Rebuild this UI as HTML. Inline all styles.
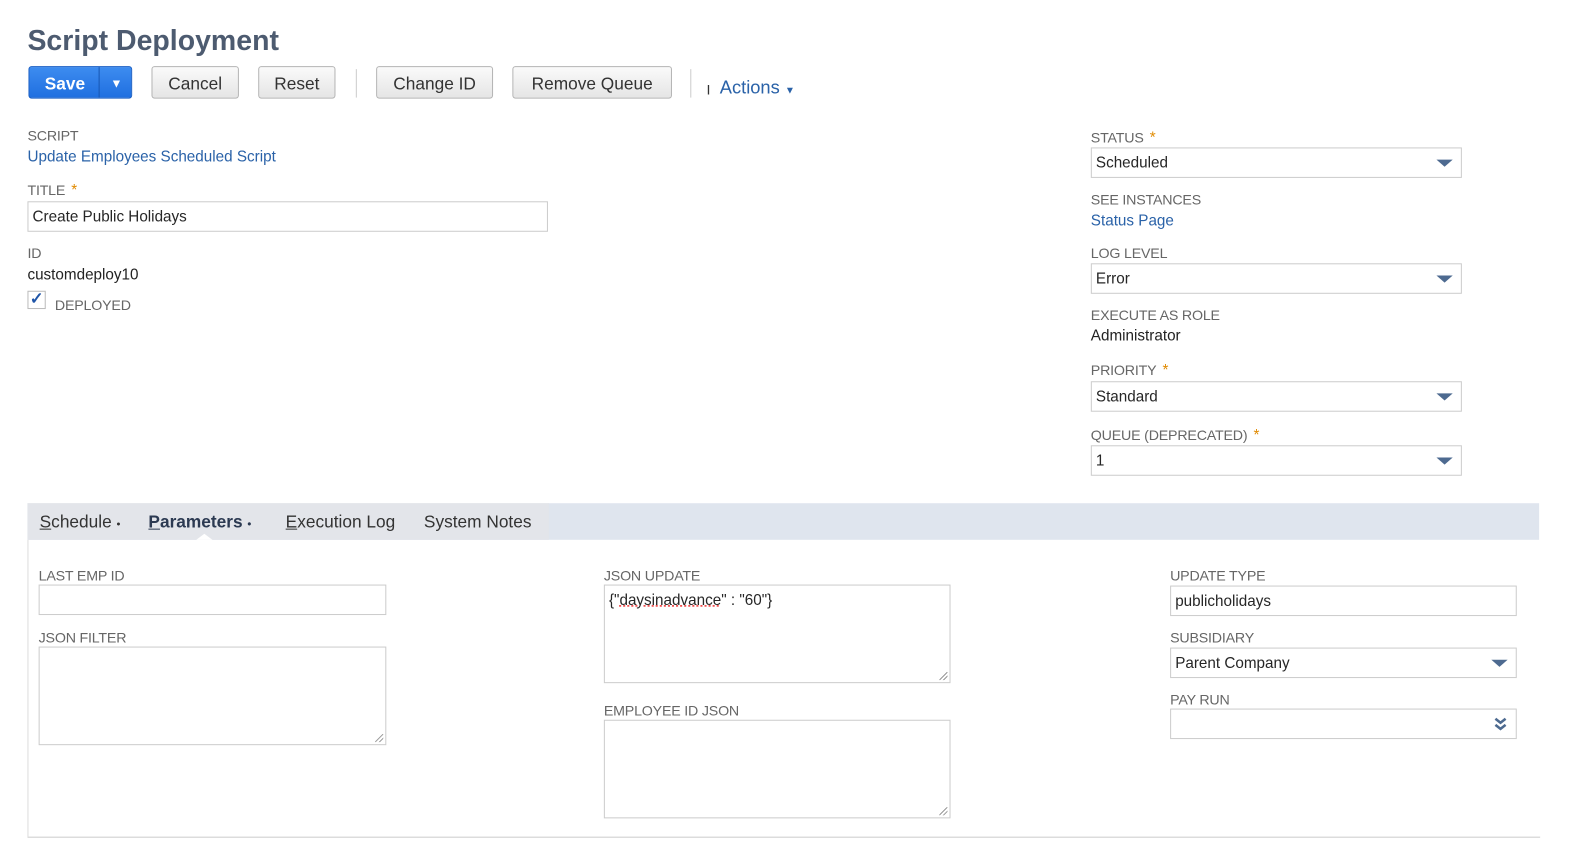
<!DOCTYPE html>
<html><head><meta charset="utf-8"><style>
body{margin:0;width:1594px;height:858px;background:#fff;font-family:"Liberation Sans",sans-serif;position:relative;overflow:hidden;color:#262626}
#w{position:absolute;left:0;top:0;width:1568px;height:844px;transform:scale(1.0166);transform-origin:0 0}
.a{position:absolute;white-space:nowrap}
.lbl{font-size:14px;color:#666;letter-spacing:-0.2px}
.val{font-size:15px;color:#222}
.link{font-size:15px;color:#2a62a8}
.star{color:#e08a00;font-size:15px;margin-left:6px}
.btn{position:absolute;top:65px;height:32px;border:1px solid #b4b4b4;border-radius:3px;background:linear-gradient(#fafafa,#e5e5e5);font-size:17px;color:#333;text-align:center;line-height:33px;box-sizing:border-box}
.inp{position:absolute;border:1px solid #ccc;box-sizing:border-box;background:#fff;font-size:15px;padding-left:4px;line-height:29px;height:30px}
.dd::after{content:"";position:absolute;right:8px;top:11px;border-left:8px solid transparent;border-right:8px solid transparent;border-top:7px solid #4d6a90}
.ta{position:absolute;border:1px solid #ccc;box-sizing:border-box;background:#fff}
.ta::after{content:"";position:absolute;right:2px;bottom:2px;width:8px;height:8px;background:linear-gradient(135deg,transparent 45%,#999 46%,#999 54%,transparent 55%,transparent 70%,#999 71%,#999 79%,transparent 80%)}
.tab{position:absolute;top:504px;font-size:17px;color:#333}
</style></head><body><div id="w">
<div class="a" style="left:27px;top:24px;font-size:28px;font-weight:bold;color:#4d5b70">Script Deployment</div>

<div class="btn" style="left:28px;width:102px;background:linear-gradient(#3d8cf0,#1f6fe0);border-color:#1a5fc4;color:#fff;font-weight:bold;text-align:left;padding-left:15px">Save<span style="position:absolute;left:68px;top:0;bottom:0;border-left:1px solid #1857b3;width:33px;text-align:center;padding:0;font-size:12px">▼</span></div>
<div class="btn" style="left:149px;width:86px">Cancel</div>
<div class="btn" style="left:254px;width:76px">Reset</div>
<div class="a" style="left:350px;top:68px;height:28px;border-left:1px solid #ccc"></div>
<div class="btn" style="left:370px;width:115px">Change ID</div>
<div class="btn" style="left:504px;width:157px">Remove Queue</div>
<div class="a" style="left:679px;top:68px;height:28px;border-left:1px solid #ccc"></div>
<div class="a" style="left:695px;top:80px;font-size:14px;color:#333">I</div>
<div class="a" style="left:708px;top:76px;font-size:18px;color:#2a62a8">Actions <span style="font-size:10px">▼</span></div>

<div class="a lbl" style="left:27px;top:125px">SCRIPT</div>
<div class="a link" style="left:27px;top:146px">Update Employees Scheduled Script</div>
<div class="a lbl" style="left:27px;top:179px">TITLE<span class="star">*</span></div>
<div class="inp" style="left:27px;top:198px;width:512px">Create Public Holidays</div>
<div class="a lbl" style="left:27px;top:241px">ID</div>
<div class="a val" style="left:27px;top:262px">customdeploy10</div>
<div class="a" style="left:27px;top:286px;width:18px;height:18px;border:1px solid #bbb;box-sizing:border-box;color:#1f55a8;font-size:16px;line-height:16px;text-align:center;font-weight:bold">✓</div>
<div class="a lbl" style="left:54px;top:292px">DEPLOYED</div>

<div class="a lbl" style="left:1073px;top:127px">STATUS<span class="star">*</span></div>
<div class="inp dd" style="left:1073px;top:145px;width:365px">Scheduled</div>
<div class="a lbl" style="left:1073px;top:188px">SEE INSTANCES</div>
<div class="a link" style="left:1073px;top:209px">Status Page</div>
<div class="a lbl" style="left:1073px;top:241px">LOG LEVEL</div>
<div class="inp dd" style="left:1073px;top:259px;width:365px">Error</div>
<div class="a lbl" style="left:1073px;top:302px">EXECUTE AS ROLE</div>
<div class="a val" style="left:1073px;top:322px">Administrator</div>
<div class="a lbl" style="left:1073px;top:356px">PRIORITY<span class="star">*</span></div>
<div class="inp dd" style="left:1073px;top:375px;width:365px">Standard</div>
<div class="a lbl" style="left:1073px;top:420px">QUEUE (DEPRECATED)<span class="star">*</span></div>
<div class="inp dd" style="left:1073px;top:438px;width:365px">1</div>

<div class="a" style="left:27px;top:495px;width:1487px;height:36px;background:#dfe5ee"></div>
<div class="a" style="left:27px;top:495px;width:513px;height:36px;background:#e3e5ea"></div>
<div class="a" style="left:27px;top:531px;width:1487px;height:292px;border-left:1px solid #ddd;border-bottom:1px solid #ccc"></div>
<div class="a" style="left:193px;top:525px;border-left:8px solid transparent;border-right:8px solid transparent;border-bottom:6px solid #fff"></div>
<div class="tab" style="left:39px"><u>S</u>chedule <span style="font-size:11px">•</span></div>
<div class="tab" style="left:146px;font-weight:bold;color:#2c3a52"><u>P</u>arameters <span style="font-size:11px">•</span></div>
<div class="tab" style="left:281px"><u>E</u>xecution Log</div>
<div class="tab" style="left:417px">System Notes</div>

<div class="a lbl" style="left:38px;top:558px">LAST EMP ID</div>
<div class="inp" style="left:38px;top:575px;width:342px"></div>
<div class="a lbl" style="left:38px;top:619px">JSON FILTER</div>
<div class="ta" style="left:38px;top:636px;width:342px;height:97px"></div>

<div class="a lbl" style="left:594px;top:558px">JSON UPDATE</div>
<div class="ta" style="left:594px;top:575px;width:341px;height:97px;font-size:15px;padding:6px 4px">{"<span style="text-decoration:underline dotted #e33">daysinadvance</span>" : "60"}</div>
<div class="a lbl" style="left:594px;top:691px">EMPLOYEE ID JSON</div>
<div class="ta" style="left:594px;top:708px;width:341px;height:97px"></div>

<div class="a lbl" style="left:1151px;top:558px">UPDATE TYPE</div>
<div class="inp" style="left:1151px;top:576px;width:341px">publicholidays</div>
<div class="a lbl" style="left:1151px;top:619px">SUBSIDIARY</div>
<div class="inp dd" style="left:1151px;top:637px;width:341px">Parent Company</div>
<div class="a lbl" style="left:1151px;top:680px">PAY RUN</div>
<div class="inp" style="left:1151px;top:697px;width:341px"><svg style="position:absolute;right:8px;top:7px" width="14" height="14" viewBox="0 0 14 14"><path d="M2 2l5 4 5-4M2 8l5 4 5-4" stroke="#4d6a90" stroke-width="2.5" fill="none"/></svg></div>
</div></body></html>
